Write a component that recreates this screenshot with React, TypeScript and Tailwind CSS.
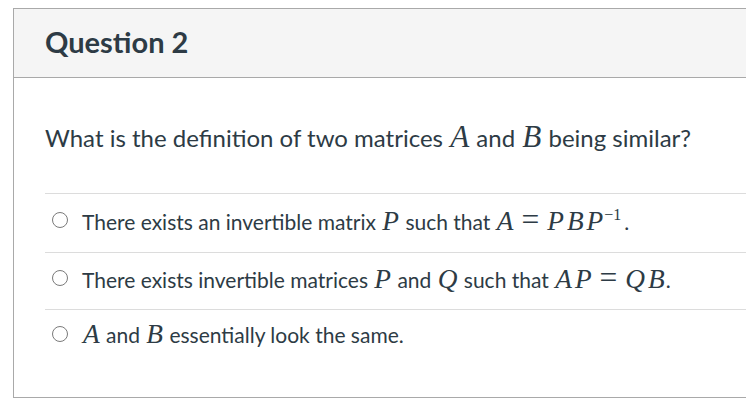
import React from "react";

const serif = { fontFamily: '"Liberation Serif", serif' };

const M = ({ t }: { t: string }) => (
  <span className="px-[1px] text-[1.3em] italic" style={serif}>
    {t.split("").map((c, i) => (
      <span key={i} className={i < t.length - 1 ? "mr-[3px]" : ""}>
        {c}
      </span>
    ))}
  </span>
);
const Eq = () => (
  <span className="mx-[7px] text-[1.5em] leading-none" style={serif}>
    =
  </span>
);

const Radio = () => (
  <span className="mr-[14px] inline-block h-[16px] w-[16px] shrink-0 rounded-full border-[1.5px] border-[#7a7a7a] bg-white" />
);

const Row = ({ pt, h, children }: { pt: string; h: string; children: React.ReactNode }) => (
  <div className={`border-t border-[#dcdcdc] pl-[7px] text-[21px] ${pt} ${h}`}>
    <div className="flex h-[30px] items-center leading-[30px]">
      <Radio />
      <span className="whitespace-nowrap">{children}</span>
    </div>
  </div>
);

export default function App() {
  return (
    <div
      className="h-[416px] w-[746px] overflow-hidden bg-white pl-[13px] pt-[8px] text-[#2d3b45]"
      style={{ fontFamily: 'Lato, "Noto Sans", sans-serif' }}
    >
      <div className="w-[800px] border border-[#a9a9a9]">
        <div className="flex h-[69px] items-center border-b border-[#a9a9a9] bg-[#f5f5f5] pb-[4px] pl-[31px]">
          <h2 className="text-[29px] font-bold leading-none">Question 2</h2>
        </div>
        <div className="pb-[31px] pl-[31px] pt-[41px]">
          <p className="h-[36px] whitespace-nowrap text-[24px] leading-[36px]">
            What is the definition of two matrices <M t="A" /> and <M t="B" /> being similar?
          </p>
          <div className="mt-[38px] w-[740px]">
            <Row pt="pt-[11px]" h="h-[59px]">
              There exists an invertible matrix <M t="P" /> such that <M t="A" />
              <Eq />
              <M t="PBP" />
              <span className="relative -top-[10px] text-[16px] leading-none" style={serif}>
                −1
              </span>
              <span className="ml-[3px]">.</span>
            </Row>
            <Row pt="pt-[10px]" h="h-[57px]">
              There exists invertible matrices <M t="P" /> and <M t="Q" /> such that <M t="AP" />
              <Eq />
              <M t="QB" />.
            </Row>
            <Row pt="pt-[9px]" h="h-[57px]">
              <M t="A" /> and <M t="B" /> essentially look the same.
            </Row>
          </div>
        </div>
      </div>
    </div>
  );
}
